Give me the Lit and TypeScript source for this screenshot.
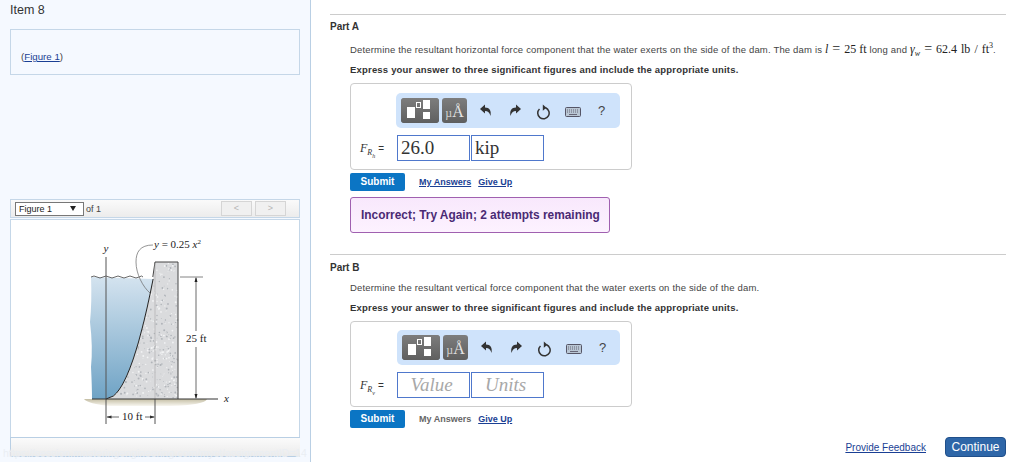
import { LitElement, html, css, svg } from "lit";
import { customElement } from "lit/decorators.js";

const px = (y: number) => 106 + 47.5 * Math.sqrt((397 - y) / 122);

function parabola() {
  let d = "";
  for (let y = 397; y >= 275; y -= 3) d += `L${px(y).toFixed(1)} ${y} `;
  return d;
}

function dots() {
  const out: unknown[] = [];
  let s = 7;
  const rnd = () => ((s = (s * 16807) % 2147483647) / 2147483647);
  for (let i = 0; i < 620; i++) {
    const x = 108 + rnd() * 70;
    const y = 261 + rnd() * 135;
    if (x < (y < 275 ? 155 : px(y)) + 1) continue;
    out.push(svg`<circle cx=${x.toFixed(1)} cy=${y.toFixed(1)} r=${(0.4 + rnd() * 0.6).toFixed(2)} fill=${rnd() > 0.5 ? "#b0b4b9" : "#f2f3f4"}></circle>`);
  }
  return out;
}

function diagram() {
  const p = parabola();
  return html`<svg class="dia" width="288" height="218" viewBox="11 218 288 218">
    <defs>
      <linearGradient id="w" x1="0" y1="0" x2="0" y2="1"><stop offset="0" stop-color="#d4e3ef"/><stop offset="1" stop-color="#6fa3c5"/></linearGradient>
      <linearGradient id="g" x1="0" y1="0" x2="0" y2="1"><stop offset="0" stop-color="#c4bea4"/><stop offset="1" stop-color="#f8f6f0"/></linearGradient>
    </defs>
    <path d="M84 397 H207 Q205 403 170 404 H110 Q88 402 84 397Z" fill="url(#g)"/>
    <path d="M91 275 Q92 300 90 320 Q93 345 91 365 Q92 385 92 397 H106 ${p} Z" fill="url(#w)"/>
    <path d="M155 260 H178 V397 H106 ${p} Z" fill="#dadbdd"/>
    ${dots()}
    <path d="M91 275 q3 -2 6 0 t6 0 t6 0 t6 0 t6 0 t6 0 t6 0 t6 0 t4 0" fill="none" stroke="#444" stroke-width=".8"/>
    <path d="M152.800 275 L155 260 H178 V397" fill="none" stroke="#444" stroke-width="1"/>
    <path d="M106 397 ${p}" fill="none" stroke="#222" stroke-width="1"/>
    <path d="M106 255 V422 M155 397 V422" fill="none" stroke="#555" stroke-width="1"/>
    <path d="M155 397 V262" fill="none" stroke="#aaa" stroke-width=".6"/>
    <path d="M92 397 H218" stroke="#333" stroke-width="1"/>
    <path d="M180 275 H203" stroke="#666" stroke-width=".8"/>
    <path d="M196 276 V329 M196 345 V396" stroke="#444" stroke-width=".8"/>
    <path d="M196 275 l-1.500 5 h3Z M196 397 l-1.500 -5 h3Z M106.500 415 l5 -1.500 v3Z M155 415 l-5 -1.500 v3Z" fill="#222"/>
    <path d="M107 415 H119 M145 415 H154" stroke="#444" stroke-width=".8"/>
    <path d="M153 243 C140 243 136 250 136 260 C136 272 143 285 150 291" fill="none" stroke="#666" stroke-width=".7"/>
    <g class="t">
      <text x="106" y="250" text-anchor="middle" font-style="italic">y</text>
      <text x="154" y="246"><tspan font-style="italic">y</tspan> = 0.25 <tspan font-style="italic">x</tspan><tspan font-size="7" dy="-4">2</tspan></text>
      <text x="186" y="340">25 ft</text>
      <text x="122" y="418">10 ft</text>
      <text x="224" y="400" font-style="italic">x</text>
    </g>
  </svg>`;
}

@customElement("app-root")
export class AppRoot extends LitElement {
  static styles = css`
    :host { display: block; width: 1024px; height: 462px; overflow: hidden; background: #fff; color: #333; font-family: "Liberation Sans", Arial, sans-serif; font-size: 9.500px; }
    * { box-sizing: border-box; }
    a { color: #1a3f94; text-decoration: underline; }
    .page { display: flex; height: 462px; position: relative; }
    .left { width: 311px; flex: none; height: 462px; background: #f5f9ff; border-right: 1px solid #b9cfe4; padding: 3px 10px 0; display: flex; flex-direction: column; }
    .item { font-size: 12.500px; line-height: 15px; color: #333; height: 26px; }
    .intro { height: 46px; border: 1px solid #c5d7e8; padding: 19px 10px 0; font-size: 9.700px; line-height: 16px; color: #444; margin-bottom: 124px; }
    .figbar { height: 19px; border: 1px solid #c5d7e8; background: linear-gradient(#fafafa, #ececec); display: flex; align-items: center; padding: 0 13px 0 4px; }
    .sel { width: 69px; height: 14px; border: 1px solid #777; background: #fff; font-size: 9px; line-height: 12px; color: #222; padding-left: 3px; display: flex; justify-content: space-between; align-items: center; }
    .sel i { width: 0; height: 0; border: 3px solid transparent; border-top: 5px solid #222; border-bottom: 0; margin-right: 7px; }
    .of { margin-left: 2px; font-size: 9px; color: #444; flex: 1; }
    .nav { width: 31px; height: 15px; margin-left: 3px; border: 1px solid #d5d5d5; background: #f0f0f0; color: #b5b5b5; font-size: 9px; line-height: 12px; text-align: center; }
    .fig { height: 218px; margin-top: 1px; border: 1px solid #c5d7e8; border-bottom: 0; background: #fff; }
    .dia { display: block; }
    .t { font-family: "Liberation Serif", serif; font-size: 11px; fill: #222; }
    .figfoot { height: 20px; border: 1px solid #b9cfe4; border-right: 0; background: linear-gradient(#fbfbfb, #ebebeb); }
    .ghost { position: absolute; left: 3px; top: 447px; white-space: nowrap; font-size: 10.500px; line-height: 13px; color: #eaeef3; }
    .right { flex: 1; padding: 14px 18px 0 19px; }
    .part { border-top: 1px solid #ccc; height: 240px; padding-top: 5px; }
    .pb { height: 194px; padding-top: 6px; }
    .ptitle { font-size: 10px; font-weight: bold; color: #333; line-height: 14px; }
    .q { margin: 8px 0 0 20px; line-height: 14px; font-size: 9.500px; letter-spacing: .175px; color: #444; white-space: nowrap; display: flex; align-items: baseline; }
    .pb .q { margin-top: 6px; }
    .m { font-family: "Liberation Serif", serif; font-size: 12px; color: #222; letter-spacing: 0; white-space: pre; }
    .m i { font-style: italic; }
    .m .e { font-size: 14px; line-height: 0; margin: 0 4px; }
    .m .g { margin-left: 4px; }
    .m .gm { margin-left: 2px; }
    .m sup { font-size: 8px; line-height: 0; }
    .m sub { font-size: 8px; line-height: 0; }
    .ex { margin: 6px 0 0 20px; font-weight: bold; line-height: 14px; font-size: 9.500px; letter-spacing: .19px; color: #333; }
    .box { margin: 6px 0 0 20px; width: 282px; height: 87px; border: 1px solid #ccc; border-radius: 4px; padding: 9px 11px 0 9px; }
    .pb .box { height: 86px; padding-top: 8px; }
    .bar { margin-left: 36px; height: 35px; background: #cfe3fb; border-radius: 5px; display: flex; align-items: center; padding-left: 5px; }
    .pb .bar { margin-left: 37px; }
    .tb { height: 25px; border-radius: 3px; background: linear-gradient(#7d7d7d, #5f5f5f); display: block; }
    .tb1 { width: 38px; margin-right: 3px; }
    .tb2 { width: 25px; margin-right: 4px; color: #d2d2d2; font-family: "Liberation Serif", serif; font-size: 12px; line-height: 28px; text-align: center; white-space: nowrap; }
    .tb2 span { font-size: 16px; color: #e4e4e4; }
    .ic { width: 29px; height: 25px; display: flex; align-items: center; justify-content: center; color: #444; font-size: 13px; }
    .low { padding-top: 3px; }
    .inrow { display: flex; align-items: center; margin-top: 7px; }
    .lab { width: 37px; font-family: "Liberation Serif", serif; font-size: 12px; font-style: italic; color: #333; white-space: nowrap; }
    .lab span { font-family: "Liberation Sans", sans-serif; font-style: normal; font-size: 10px; }
    .lab sub { font-size: 8px; line-height: 0; }
    .lab sub sub { font-size: 6px; }
    .in { width: 73px; height: 26px; border: 1px solid #4f78cc; font-family: "Liberation Serif", serif; font-size: 19px; line-height: 24px; color: #333; padding-left: 3px; margin-right: 1px; }
    .ph { color: #a8a8a8; font-style: italic; text-align: center; padding: 0 4px 0 0; }
    .acts { margin: 3px 0 0 20px; display: flex; align-items: center; height: 18px; font-size: 9px; font-weight: bold; }
    .sub { width: 55px; height: 18px; background: #0b75c4; border-radius: 2px; color: #fff; font-size: 10px; line-height: 18px; text-align: center; margin-right: 14px; }
    .acts a { margin-right: 7px; }
    .off { color: #666; margin-right: 7px; }
    .alert { margin: 6px 0 0 20px; width: 260px; height: 36px; border: 1px solid #a060b0; border-radius: 3px; background: linear-gradient(#f8e8fc, #fdf2ff); color: #4a2a74; font-weight: bold; font-size: 11.900px; line-height: 34px; padding-left: 10px; white-space: nowrap; }
    .foot { display: flex; justify-content: flex-end; align-items: center; gap: 19px; margin-top: 9px; }
    .fb { font-size: 10px; }
    .cont { width: 61px; height: 20px; border-radius: 4px; background: #2e66a8; border: 1px solid #204f8a; color: #fff; font-size: 12px; line-height: 18px; text-align: center; }
  `;

  private toolbar() {
    return html`<div class="bar">
      <svg class="tb tb1" viewBox="0 0 38 25">
        <defs><linearGradient id="tbg" x1="0" y1="0" x2="0" y2="1"><stop offset="0" stop-color="#7d7d7d"/><stop offset="1" stop-color="#5f5f5f"/></linearGradient></defs>
        <rect width="38" height="25" rx="3" fill="url(#tbg)"/>
        <path d="M6 9h8v11H6z M22 2h7v9h-7z M22 14h7v7h-7z" fill="#fff"/>
        <rect x="15.500" y="4.500" width="4" height="5" fill="none" stroke="#fff" stroke-width="1"/>
      </svg>
      <div class="tb tb2">µ<span>Å</span></div>
      <div class="ic"><svg width="14" height="13" viewBox="0 0 14 13"><path d="M1 5 L6 .5 V3.500 C10.500 3.500 12.500 6.500 11.500 12 C10.500 8.500 9 7 6 7 V9.500Z" fill="#333"/></svg></div>
      <div class="ic"><svg width="14" height="13" viewBox="0 0 14 13"><path d="M13 5 L8 .5 V3.500 C3.500 3.500 1.500 6.500 2.500 12 C3.500 8.500 5 7 8 7 V9.500Z" fill="#333"/></svg></div>
      <div class="ic low"><svg width="15" height="16" viewBox="0 0 15 16"><path d="M9.500 3.800 A5.700 5.700 0 1 1 3.500 5" fill="none" stroke="#333" stroke-width="1.500"/><path d="M6.800 .5 L10.500 3.800 L6.800 6.800Z" fill="#333"/></svg></div>
      <div class="ic low"><svg width="16" height="10" viewBox="0 0 16 10"><rect x=".5" y=".5" width="15" height="9" rx="1" fill="#b9c6d4" stroke="#556"/><path d="M2 3h12M2 5h12" stroke="#667" stroke-dasharray="1 1"/><path d="M4 7.500h8" stroke="#667"/></svg></div>
      <div class="ic">?</div>
    </div>`;
  }

  render() {
    return html`<div class="page">
      <div class="left">
        <div class="item">Item 8</div>
        <div class="intro">(<a href="#">Figure 1</a>)</div>
        <div class="figbar">
          <div class="sel">Figure 1<i></i></div>
          <div class="of">of 1</div>
          <div class="nav">&lt;</div><div class="nav">&gt;</div>
        </div>
        <div class="fig">${diagram()}</div>
        <div class="figfoot"></div>
      </div>
      <div class="ghost">https://session.masteringengineering.com/myct/assignmentID=14</div>
      <div class="right">
        <div class="part">
          <div class="ptitle">Part A</div>
          <div class="q">Determine the resultant horizontal force component that the water exerts on the side of the dam. The dam is&nbsp;<span class="m"><i>l</i><span class="e">=</span>25 ft</span>&nbsp;long and&nbsp;<span class="m gm"><i>γ<sub>w</sub></i><span class="e">=</span>62.4<span class="g">lb</span><span class="g">/</span><span class="g">ft</span><sup>3</sup></span>.</div>
          <div class="ex">Express your answer to three significant figures and include the appropriate units.</div>
          <div class="box">
            ${this.toolbar()}
            <div class="inrow">
              <div class="lab">F<sub>R<sub>h</sub></sub> <span>=</span></div>
              <div class="in">26.0</div><div class="in">kip</div>
            </div>
          </div>
          <div class="acts"><div class="sub">Submit</div><a href="#">My Answers</a><a href="#">Give Up</a></div>
          <div class="alert">Incorrect; Try Again; 2 attempts remaining</div>
        </div>
        <div class="part pb">
          <div class="ptitle">Part B</div>
          <div class="q">Determine the resultant vertical force component that the water exerts on the side of the dam.</div>
          <div class="ex">Express your answer to three significant figures and include the appropriate units.</div>
          <div class="box">
            ${this.toolbar()}
            <div class="inrow">
              <div class="lab">F<sub>R<sub>v</sub></sub> <span>=</span></div>
              <div class="in ph">Value</div><div class="in ph">Units</div>
            </div>
          </div>
          <div class="acts"><div class="sub">Submit</div><span class="off">My Answers</span><a href="#">Give Up</a></div>
          <div class="foot"><a class="fb" href="#">Provide Feedback</a><div class="cont">Continue</div></div>
        </div>
      </div>
    </div>`;
  }
}
